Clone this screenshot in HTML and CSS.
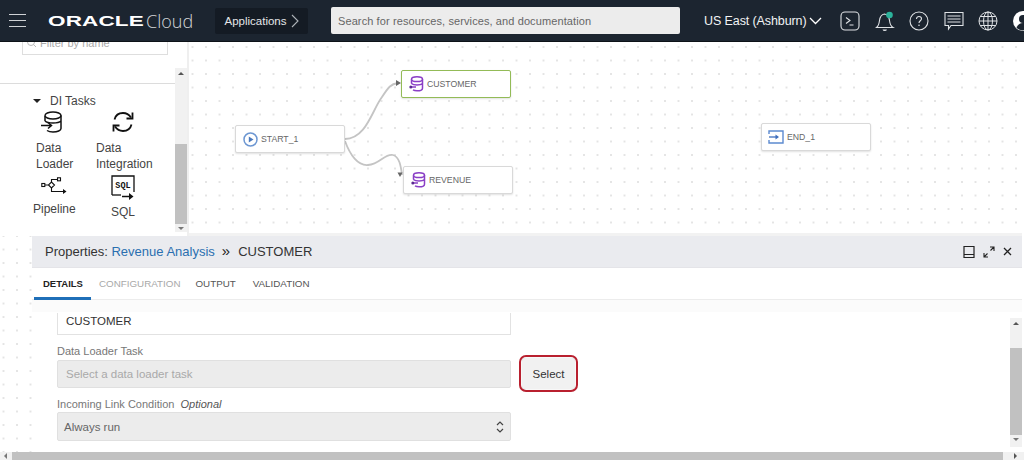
FILE: index.html
```html
<!DOCTYPE html>
<html lang="en">
<head>
<meta charset="utf-8">
<title>Oracle Cloud</title>
<link rel="stylesheet" href="styles.css">
</head>
<body>
<div class="app">
  <header class="topbar">
    <div class="burger"><span></span><span></span><span></span></div>
    <div class="logo"><span class="logo-oracle">ORACLE</span><span class="logo-cloud">Cloud</span></div>
    <div class="apps">Applications
      <svg width="8" height="14" viewBox="0 0 8 14"><path d="M1 1l6 6-6 6" fill="none" stroke="#aeb3b8" stroke-width="1.1"/></svg>
    </div>
    <div class="search">Search for resources, services, and documentation</div>
    <div class="region">US East (Ashburn)
      <svg width="13" height="8" viewBox="0 0 13 8"><path d="M1 1l5.500 5.500L12 1" fill="none" stroke="#fff" stroke-width="1.3"/></svg>
    </div>
    <div class="tools">
      <svg class="ti" width="20" height="20" viewBox="0 0 20 20"><rect x="1" y="1" width="18" height="18" rx="4" fill="none" stroke="#dfe2e5" stroke-width="1.1"/><path d="M6 6.500l4 3-4 3M9.500 14h4" fill="none" stroke="#dfe2e5" stroke-width="1.1"/></svg>
      <svg class="ti" width="20" height="22" viewBox="0 0 20 22"><path d="M1.500 17.500c2-1.500 2.500-3 3-7 .5-4 2-6 5-6.500 3 .5 4.500 2.500 5 6.500.5 4 1 5.500 3.500 7z" fill="none" stroke="#dfe2e5" stroke-width="1.1"/><path d="M7.500 19.500a2.300 2 0 0 0 4.500 0z" fill="#dfe2e5"/><circle cx="14.500" cy="5" r="3.300" fill="#2bb39b"/></svg>
      <svg class="ti" width="20" height="20" viewBox="0 0 20 20"><circle cx="10" cy="10" r="9" fill="none" stroke="#dfe2e5" stroke-width="1.1"/><path d="M7.500 8c0-1.600 1.100-2.500 2.500-2.500s2.500 1 2.500 2.300c0 2-2.500 2-2.500 4.200" fill="none" stroke="#dfe2e5" stroke-width="1.1"/><circle cx="10" cy="14.300" r=".8" fill="#dfe2e5"/></svg>
      <svg class="ti" width="20" height="20" viewBox="0 0 20 20"><path d="M1 1.500h18v13H7l-2.500 3.500v-3.500H1z" fill="none" stroke="#dfe2e5" stroke-width="1.1"/><path d="M3.500 5h13M3.500 8h13M3.500 11h13" stroke="#dfe2e5"/></svg>
      <svg class="ti" width="20" height="20" viewBox="0 0 20 20"><g fill="none" stroke="#dfe2e5"><circle cx="10" cy="10" r="9"/><ellipse cx="10" cy="10" rx="4.500" ry="9"/><path d="M10 1v18M1 10h18M2.300 5.500h15.400M2.300 14.500h15.400"/></g></svg>
      <svg class="ti avatar" width="20" height="20" viewBox="0 0 20 20"><circle cx="10" cy="10" r="10" fill="#fff"/><circle cx="10" cy="8" r="4" fill="#1c2530"/><path d="M3.500 17c1-3.500 3.500-5 6.500-5s5.500 1.500 6.500 5a10 10 0 0 1-13 0z" fill="#1c2530"/></svg>
    </div>
  </header>

  <main class="stage">
    <div class="upper">
      <aside class="palette">
        <div class="pal-body">
          <div class="filter">
            <svg width="9" height="9" viewBox="0 0 9 9"><circle cx="4" cy="0" r="3.500" fill="none" stroke="#bbb"/><path d="M6.500 2.500L9 5" stroke="#bbb"/></svg>
            <span>Filter by name</span>
          </div>
          <div class="pal-rule"></div>
          <div class="group"><span class="caret"></span>DI Tasks</div>
          <div class="pal-grid">
            <div class="tool">
              <svg class="tool-icon shift" width="24" height="22" viewBox="0 0 24 22"><g fill="none" stroke="#111" stroke-width="1.500"><ellipse cx="13" cy="4.500" rx="8" ry="3.500"/><path d="M5 5v5M21 4.500v13c0 2-3.500 3.500-8 3.500-2.500 0-4.500-.5-6-1.500M5 10c1.500 1.500 4.500 2 8 2s6.500-.5 8-2"/><path d="M1 14.500h10M8 11.500l3.500 3-3.500 3"/></g></svg>
              <div class="tool-label">Data<br>Loader</div>
            </div>
            <div class="tool">
              <svg class="tool-icon" width="22" height="22" viewBox="0 0 22 22"><g fill="none" stroke="#111" stroke-width="1.800"><path d="M2.500 8.500C3.500 4.500 7 2 11 2c3.500 0 6 1.500 8 4.500"/><path d="M20.500 1.500v6h-6"/><path d="M19.500 13.500C18.500 17.500 15 20 11 20c-3.500 0-6-1.500-8-4.500"/><path d="M1.500 20.500v-6h6"/></g></svg>
              <div class="tool-label">Data<br>Integration</div>
            </div>
            <div class="tool tool-tight">
              <svg class="tool-icon" width="26" height="18" viewBox="0 0 26 18"><g fill="none" stroke="#111" stroke-width="1.100"><rect x=".8" y="6.500" width="3" height="3"/><path d="M4 8h3.500l3-3 3 3-3 3-3-3"/><path d="M10.500 5V2.500h6M10.500 11v3.500h13"/><rect x="16.500" y=".8" width="3" height="3"/></g><path d="M22 12l3.500 2.500-3.500 2.500z" fill="#111"/></svg>
              <div class="tool-label">Pipeline</div>
            </div>
            <div class="tool tool-sql">
              <svg class="tool-icon" width="24" height="26" viewBox="0 0 24 26"><path d="M1 20V1h22v16" fill="none" stroke="#111" stroke-width="1.300"/><path d="M1 20h9" stroke="#111" stroke-width="1.300"/><path d="M11 21.500h9" stroke="#111" stroke-width="1.500"/><path d="M18 18l4.500 3.500-4.500 3.500z" fill="#111"/><text x="12" y="13" class="sql-text">SQL</text></svg>
              <div class="tool-label centered">SQL</div>
            </div>
          </div>
        </div>
        <div class="vbar vbar-pal">
          <span class="arrow up"></span>
          <div class="vbar-gap-pal"></div>
          <div class="thumb thumb-pal"></div>
          <span class="arrow down"></span>
        </div>
      </aside>

      <section class="canvas">
        <svg class="links" width="835" height="194" viewBox="189 42 835 194">
          <g fill="none" stroke="#c4c4c4" stroke-width="1.800">
            <path d="M345 139C365 139 372 112 380 100S390 84 398 83"/>
            <path d="M345 141C350 155 358 166 368 165C380 164 385 153 393 155C400 157 401 168 402 175"/>
          </g>
          <path d="M396 80l5 3-5 3zM400 177l-2.500-4.500h5z" fill="#666"/>
        </svg>

        <div class="node node-customer">
          <svg width="15" height="16" viewBox="0 0 15 16"><g fill="none" stroke="#8a3fc6" stroke-width="1.500"><ellipse cx="8" cy="3.200" rx="5.500" ry="2.400"/><path d="M2.500 3.500v4M13.500 3.200v9c0 1.500-2.500 2.600-5.500 2.600-1.500 0-3-.3-4-.9M2.500 7.500c1 1 3 1.500 5.500 1.500s4.500-.5 5.500-1.500"/><path d="M1 11h6"/></g><circle cx="1.800" cy="11" r="1.500" fill="#5a2a90"/></svg>
          <span>CUSTOMER</span>
        </div>
        <div class="node node-start">
          <svg width="15" height="15" viewBox="0 0 15 15"><circle cx="7.500" cy="7.500" r="6.500" fill="none" stroke="#6d97d2" stroke-width="1.500"/><path d="M5.800 4.500l4.700 3-4.700 3z" fill="#4b79bd"/></svg>
          <span>START_1</span>
        </div>
        <div class="node node-revenue">
          <svg width="15" height="16" viewBox="0 0 15 16"><g fill="none" stroke="#8a3fc6" stroke-width="1.500"><ellipse cx="8" cy="3.200" rx="5.500" ry="2.400"/><path d="M2.500 3.500v4M13.500 3.200v9c0 1.500-2.500 2.600-5.500 2.600-1.500 0-3-.3-4-.9M2.500 7.500c1 1 3 1.500 5.500 1.500s4.500-.5 5.500-1.500"/><path d="M1 11h6"/></g><circle cx="1.800" cy="11" r="1.500" fill="#5a2a90"/></svg>
          <span>REVENUE</span>
        </div>
        <div class="node node-end">
          <svg width="16" height="14" viewBox="0 0 16 14"><path d="M1 4V1h14v12H1v-3" fill="none" stroke="#5c8ad0" stroke-width="1.400"/><path d="M1 7h8" stroke="#3e6fbd" stroke-width="1.300"/><path d="M7.500 4.500L11 7l-3.500 2.500z" fill="#3e6fbd"/></svg>
          <span>END_1</span>
        </div>
      </section>
    </div>

    <section class="props">
      <div class="props-head">
        <div class="props-title">Properties: <a class="crumb">Revenue Analysis</a><span class="sep">»</span>CUSTOMER</div>
        <div class="props-actions">
          <svg width="12" height="12" viewBox="0 0 12 12"><path d="M1 .5h10v11H1zM1 8.500h10" fill="none" stroke="#222" stroke-width="1.200"/></svg>
          <svg width="12" height="12" viewBox="0 0 12 12"><path d="M7 1h4v4M11 1L7.500 4.500M5 11H1V7M1 11l3.500-3.500" fill="none" stroke="#222" stroke-width="1.100"/></svg>
          <svg width="9" height="9" viewBox="0 0 9 9"><path d="M1 1l7 7M8 1L1 8" stroke="#222" stroke-width="1.300"/></svg>
        </div>
      </div>
      <nav class="tabs">
        <div class="tab tab-active">DETAILS</div>
        <div class="tab tab-dim">CONFIGURATION</div>
        <div class="tab">OUTPUT</div>
        <div class="tab">VALIDATION</div>
      </nav>
      <div class="props-body">
        <div class="form">
          <div class="field-clip">CUSTOMER</div>
          <div class="label label-task">Data Loader Task</div>
          <div class="row">
            <div class="input input-ph">Select a data loader task</div>
            <div class="btn-ring"><div class="btn">Select</div></div>
          </div>
          <div class="label label-cond">Incoming Link Condition <em>Optional</em></div>
          <div class="input input-select">Always run
            <svg width="8" height="14" viewBox="0 0 8 14"><path d="M1 5l3-3 3 3M1 9l3 3 3-3" fill="none" stroke="#444" stroke-width="1.200"/></svg>
          </div>
        </div>
        <div class="vbar vbar-props">
          <span class="arrow up"></span>
          <div class="vbar-gap-props"></div>
          <div class="thumb thumb-props"></div>
          <span class="arrow down"></span>
        </div>
      </div>
    </section>

    <div class="hbar">
      <span class="arrow left"></span>
      <div class="hthumb"></div>
      <span class="arrow right"></span>
    </div>
  </main>
</div>
</body>
</html>
```

FILE: styles.css
```css
* { box-sizing: border-box; }
html, body { margin: 0; padding: 0; height: 100%; overflow: hidden; }
body { font-family: "Liberation Sans", Arial, sans-serif; color: #333; background: #fff; }
.app { width: 1024px; height: 460px; display: flex; flex-direction: column; overflow: hidden; }

.topbar { height: 42px; flex: none; background: #1c2530; border-bottom: 1px solid #0d1218; display: flex; align-items: center; color: #fff; }
.topbar > * { flex: none; }
.burger { width: 17px; margin-left: 9px; display: flex; flex-direction: column; gap: 5px; }
.burger span { height: 1px; background: #cfd2d5; }
.logo { margin-left: 22px; display: flex; align-items: center; width: 146px; }
.logo-oracle { font-family: "Liberation Sans", sans-serif; font-size: 15px; font-weight: 700; letter-spacing: .1px; display: inline-block; transform: scale(1.5, 1); transform-origin: left center; width: 98px; flex: none; }
.logo-cloud { font-family: "Open Sans", sans-serif; font-weight: 300; font-size: 18px; color: #d5d7da; }
.apps { margin-left: 21px; width: 93px; height: 26px; background: #141b24; font-size: 11.500px; display: flex; align-items: center; justify-content: center; gap: 4px; color: #e4e6e8; border-radius: 2px; }
.search { margin-left: 23px; width: 349px; height: 27px; background: #ececec; color: #666; font-size: 11px; letter-spacing: .1px; border-radius: 2px; display: flex; align-items: center; padding-left: 7px; }
.region { margin-left: 24px; width: 118px; font-size: 12.500px; letter-spacing: -.1px; display: flex; align-items: center; justify-content: space-between; white-space: nowrap; color: #f2f3f4; }
.tools { margin-left: 18px; display: flex; align-items: center; gap: 14.500px; }
.ti { flex: none; display: block; }

.stage { flex: 1; min-height: 0; display: flex; flex-direction: column; background-color: #fff; background-image: radial-gradient(circle, #e4e4e4 .8px, transparent 1.100px); background-size: 13.500px 13.500px; background-position: 10.250px -1.750px; }
.upper { height: 194px; flex: none; display: flex; }

.palette { position: relative; z-index: 1; width: 189px; height: 194px; flex: none; background: #fff; display: flex; border-right: 2px solid #efefef; }
.pal-body { width: 175px; flex: none; display: flex; flex-direction: column; }
.filter { width: 146px; height: 13px; margin-left: 22px; border: 1px solid #dedede; border-top: 0; display: flex; align-items: flex-start; gap: 4px; padding-left: 4px; overflow: hidden; color: #aaa; font-size: 11px; flex: none; }
.filter svg { flex: none; }
.filter span { line-height: 12px; margin-top: -5px; }
.pal-rule { height: 1px; background: #dcdcdc; margin-top: 28px; flex: none; }
.group { margin: 10px 0 0 33px; font-size: 12px; line-height: 14px; display: flex; align-items: center; gap: 9px; color: #444; }
.caret { width: 0; height: 0; border-left: 4px solid transparent; border-right: 4px solid transparent; border-top: 4px solid #222; }
.pal-grid { margin: 3px 0 0 33px; display: grid; grid-template-columns: 41px 54px; column-gap: 22px; grid-template-rows: 62px 46px; }
.tool { display: flex; flex-direction: column; align-items: center; white-space: nowrap; }
.tool-icon { display: block; flex: none; }
.shift { position: relative; left: -2px; }
.tool-label { font-size: 12px; line-height: 16px; color: #444; width: 100%; margin-top: 7px; }
.tool:first-child .tool-label { padding-left: 3px; }
.tool-tight { padding-top: 4px; }
.tool-tight .tool-label { margin-top: 6px; text-align: center; }
.tool-sql { padding-top: 2px; }
.tool-label.centered { text-align: center; margin-top: 3px; }
.sql-text { font: 700 8.500px "Liberation Mono", monospace; fill: #111; text-anchor: middle; }

.vbar { width: 12px; flex: none; background: #f1f1f1; display: flex; flex-direction: column; align-items: center; }
.vbar-pal { margin: 26px 0 4px; }
.vbar-gap-pal { height: 69px; flex: none; }
.thumb { width: 12px; background: #c1c1c1; flex: none; }
.thumb-pal { height: 80px; }
.arrow { width: 0; height: 0; display: block; flex: none; }
.arrow.up { border-left: 3px solid transparent; border-right: 3px solid transparent; border-bottom: 3px solid #555; margin-top: 4px; }
.arrow.down { border-left: 3px solid transparent; border-right: 3px solid transparent; border-top: 3px solid #777; margin-top: 3px; }
.arrow.left { border-top: 3px solid transparent; border-bottom: 3px solid transparent; border-right: 3px solid #777; margin-left: 4px; }
.arrow.right { border-top: 3px solid transparent; border-bottom: 3px solid transparent; border-left: 3px solid #555; margin: 0 7px 0 auto; }

.canvas { flex: 1; position: relative; }
.links { position: absolute; left: 0; top: 0; }
.node { position: absolute; width: 110px; height: 28px; background: #fff; border: 1px solid #d9d9d9; border-radius: 2px; box-shadow: 0 1px 2px rgba(0,0,0,.12); display: flex; align-items: center; font-size: 8.700px; color: #666; padding-left: 7px; gap: 3px; }
.node-customer { left: 212px; top: 28px; border: 1.500px solid #93bb57; }
.node-start { left: 46px; top: 83px; gap: 3px; }
.node-revenue { left: 214px; top: 124px; }
.node-end { left: 572px; top: 81px; padding-left: 6px; gap: 3px; }

.props { height: 216px; flex: none; margin: 0 2px 0 32px; background: #fff; display: flex; flex-direction: column; box-shadow: 0 -3px 0 #f2f2f2; }
.props-head { height: 32px; flex: none; background: #eaebef; display: flex; align-items: center; justify-content: space-between; padding: 0 10px 0 13px; border-bottom: 1px solid #e4e4e8; }
.props-title { font-size: 13px; color: #333; }
.crumb { color: #2a6fb0; }
.sep { margin: 0 8px 0 7px; font-size: 15px; line-height: 13px; color: #222; }
.props-actions { display: flex; align-items: center; gap: 8px; }
.tabs { height: 32px; flex: none; display: flex; border-bottom: 1px solid #ececec; padding-left: 2px; font-size: 9.800px; }
.tab { padding: 10px 0 0; color: #555; margin-right: 17px; white-space: nowrap; }
.tab-active { color: #222; font-weight: 700; width: 57px; padding-left: 9px; margin-right: 8px; border-bottom: 3px solid #1f6fb8; height: 32px; font-size: 9.500px; }
.tab-dim { color: #a8a8a8; margin-right: 15px; }
.props-body { flex: 1; min-height: 0; display: flex; justify-content: space-between; background: linear-gradient(#fbfbfb 12px, #fff 12px); }
.form { width: 520px; margin-left: 25px; display: flex; flex-direction: column; }
.field-clip { margin-top: 13px; width: 454px; height: 22px; flex: none; background: #fff; border: 1px solid #e2e2e2; border-top: 0; font-size: 11.500px; color: #333; padding-left: 8px; line-height: 16px; }
.label { font-size: 11px; color: #777; line-height: 13px; flex: none; }
.label-task { margin-top: 10px; }
.label-cond { margin-top: 6px; }
.label em { color: #555; margin-left: 3px; }
.row { display: flex; align-items: center; gap: 3px; margin-top: -3px; height: 37px; flex: none; }
.input { width: 454px; height: 28px; flex: none; background: #ececec; border: 1px solid #e0e0e0; border-radius: 2px; font-size: 11.500px; padding-left: 8px; display: flex; align-items: center; }
.input-ph { color: #a9a9a9; }
.input-select { height: 29px; margin-top: 1px; justify-content: space-between; color: #666; padding-left: 6px; padding-right: 6px; }
.btn-ring { width: 59px; height: 37px; border: 2px solid #b9202f; border-radius: 7px; padding: 1px; margin-left: 5px; flex: none; background: #fff; }
.btn { height: 100%; background: #f1f1f1; border-radius: 3px; font-size: 11.500px; color: #333; display: flex; align-items: center; justify-content: center; box-shadow: 0 0 1px rgba(0,0,0,.3); }
.vbar-props { margin: 18px 0 5px 0; }
.vbar-gap-props { height: 23px; flex: none; }
.thumb-props { height: 87px; }

.hbar { flex: 1; min-height: 0; background: #f1f1f1; display: flex; align-items: center; }
.hthumb { width: 991px; height: 8px; background: #c1c1c1; margin-left: 5px; flex: none; }
```
